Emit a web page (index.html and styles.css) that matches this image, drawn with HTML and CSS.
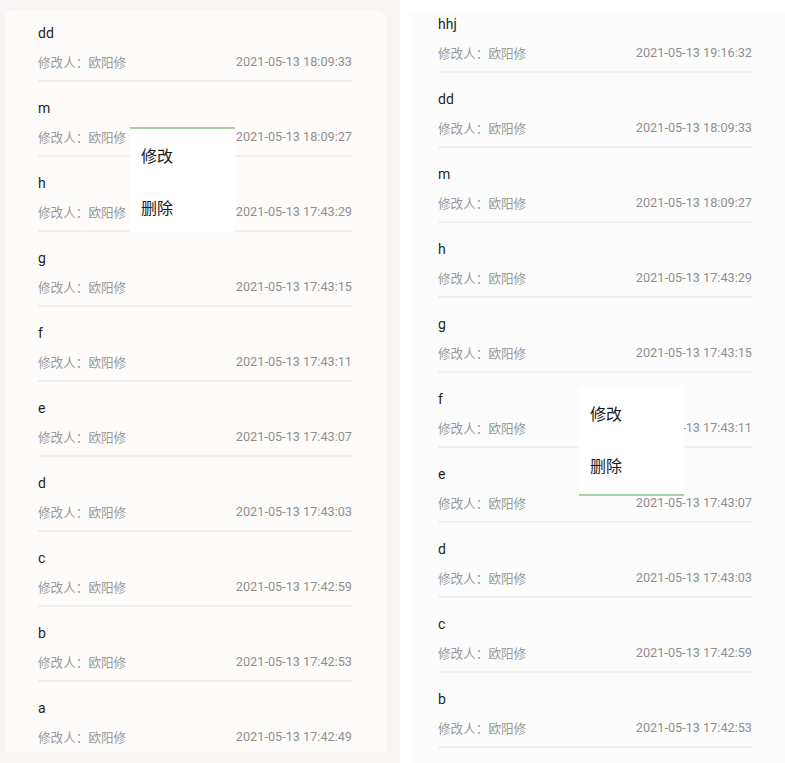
FILE: index.html
```html
<!DOCTYPE html>
<html lang="zh">
<head>
<meta charset="utf-8">
<title>修改记录</title>
<link rel="stylesheet" href="styles.css">
</head>
<body>
<div class="screens">
  <section class="panel panel-left">
    <div class="card">
      <div class="row"><div class="title">dd</div><div class="meta"><span>修改人：欧阳修</span><span class="date">2021-05-13 18:09:33</span></div></div>
      <div class="row"><div class="title">m</div><div class="meta"><span>修改人：欧阳修</span><span class="date">2021-05-13 18:09:27</span></div></div>
      <div class="row"><div class="title">h</div><div class="meta"><span>修改人：欧阳修</span><span class="date">2021-05-13 17:43:29</span></div></div>
      <div class="row"><div class="title">g</div><div class="meta"><span>修改人：欧阳修</span><span class="date">2021-05-13 17:43:15</span></div></div>
      <div class="row"><div class="title">f</div><div class="meta"><span>修改人：欧阳修</span><span class="date">2021-05-13 17:43:11</span></div></div>
      <div class="row"><div class="title">e</div><div class="meta"><span>修改人：欧阳修</span><span class="date">2021-05-13 17:43:07</span></div></div>
      <div class="row"><div class="title">d</div><div class="meta"><span>修改人：欧阳修</span><span class="date">2021-05-13 17:43:03</span></div></div>
      <div class="row"><div class="title">c</div><div class="meta"><span>修改人：欧阳修</span><span class="date">2021-05-13 17:42:59</span></div></div>
      <div class="row"><div class="title">b</div><div class="meta"><span>修改人：欧阳修</span><span class="date">2021-05-13 17:42:53</span></div></div>
      <div class="row"><div class="title">a</div><div class="meta"><span>修改人：欧阳修</span><span class="date">2021-05-13 17:42:49</span></div></div>
    </div>
    <div class="popup popup-down">
      <div class="popup-item">修改</div>
      <div class="popup-item">删除</div>
    </div>
  </section>
  <section class="panel panel-right">
    <div class="list">
      <div class="row"><div class="title">hhj</div><div class="meta"><span>修改人：欧阳修</span><span class="date">2021-05-13 19:16:32</span></div></div>
      <div class="row"><div class="title">dd</div><div class="meta"><span>修改人：欧阳修</span><span class="date">2021-05-13 18:09:33</span></div></div>
      <div class="row"><div class="title">m</div><div class="meta"><span>修改人：欧阳修</span><span class="date">2021-05-13 18:09:27</span></div></div>
      <div class="row"><div class="title">h</div><div class="meta"><span>修改人：欧阳修</span><span class="date">2021-05-13 17:43:29</span></div></div>
      <div class="row"><div class="title">g</div><div class="meta"><span>修改人：欧阳修</span><span class="date">2021-05-13 17:43:15</span></div></div>
      <div class="row"><div class="title">f</div><div class="meta"><span>修改人：欧阳修</span><span class="date">2021-05-13 17:43:11</span></div></div>
      <div class="row"><div class="title">e</div><div class="meta"><span>修改人：欧阳修</span><span class="date">2021-05-13 17:43:07</span></div></div>
      <div class="row"><div class="title">d</div><div class="meta"><span>修改人：欧阳修</span><span class="date">2021-05-13 17:43:03</span></div></div>
      <div class="row"><div class="title">c</div><div class="meta"><span>修改人：欧阳修</span><span class="date">2021-05-13 17:42:59</span></div></div>
      <div class="row"><div class="title">b</div><div class="meta"><span>修改人：欧阳修</span><span class="date">2021-05-13 17:42:53</span></div></div>
    </div>
    <div class="popup popup-up">
      <div class="popup-item">修改</div>
      <div class="popup-item">删除</div>
    </div>
  </section>
</div>
</body>
</html>
```

FILE: styles.css
```css
* { box-sizing: border-box; }

html, body {
  margin: 0;
  padding: 0;
  background: #ffffff;
}

body {
  font-family: Roboto, "Noto Sans CJK SC", sans-serif;
  width: 785px;
  height: 763px;
  overflow: hidden;
}

.screens {
  display: flex;
  height: 763px;
}

.panel {
  position: relative;
  overflow: hidden;
  height: 763px;
}

.panel-left {
  width: 400px;
  flex: none;
  background: #f8f6f5;
  padding: 10px 14px 0 5px;
}

.card {
  width: 381px;
  height: 742px;
  background: #fdfcfb;
  border-radius: 9px 9px 0 0;
  padding: 0 34px 0 33px;
  overflow: hidden;
}

.panel-right {
  flex: 1;
  background: #ffffff;
  padding: 13px 0 0 10px;
}

.list {
  height: 750px;
  background: #fcfcfc;
  padding: 0 33px 0 28px;
  overflow: hidden;
}

.row {
  padding: 16px 0 9px;
  border-bottom: 2px solid #f3efed;
}

.list .row {
  border-bottom-color: #f1f1f1;
}

.card .row:first-child {
  padding-top: 13px;
}

.list .row:first-child {
  padding-top: 1px;
}

.title {
  font-size: 14px;
  line-height: 20px;
  color: #1f1f1f;
}

.meta {
  display: flex;
  justify-content: space-between;
  align-items: center;
  margin-top: 8px;
  height: 20px;
  font-size: 12.6px;
  color: #9a9a9a;
  font-family: "Noto Sans CJK SC", sans-serif;
}

.date {
  font-family: Roboto, sans-serif;
  font-size: 12.7px;
  color: #8f8f8f;
}

.popup {
  position: absolute;
  width: 105px;
  background: #ffffff;
  font-family: "Noto Sans CJK SC", sans-serif;
}

.popup-item {
  height: 52px;
  line-height: 52px;
  padding-left: 11px;
  font-size: 16px;
  color: #1a1a1a;
}

.popup-down {
  left: 130px;
  top: 127px;
  border-top: 2px solid #a3d3a3;
}

.popup-up {
  left: 179px;
  top: 387px;
  padding-bottom: 3px;
  border-bottom: 2px solid #a3d3a3;
}
```
